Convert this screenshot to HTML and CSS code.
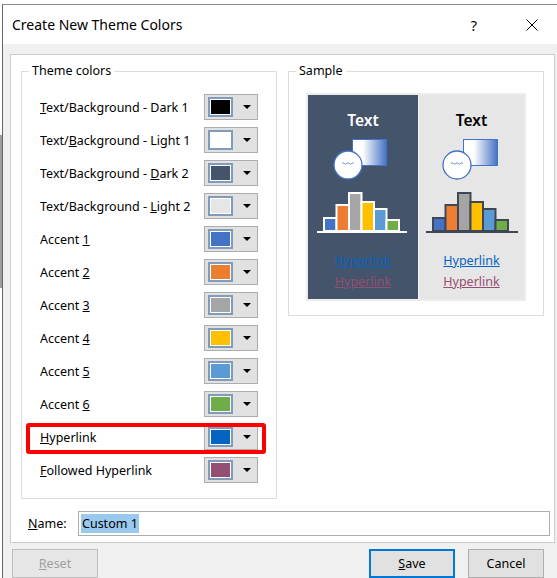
FILE: index.html
```html
<!DOCTYPE html>
<html>
<head>
<meta charset="utf-8">
<title>Create New Theme Colors</title>
<link rel="stylesheet" href="styles.css">
</head>
<body>
<div class="window">
  <div class="titlebar">
    <span class="title">Create New Theme Colors</span>
    <span class="help">?</span>
    <svg class="close" viewBox="0 0 12 12" width="12" height="12"><path d="M0.5 0.5L11.5 11.5M11.5 0.5L0.5 11.5"/></svg>
  </div>
  <div class="body">
    <div class="panel">
      <div class="groups">
        <fieldset class="group theme">
          <legend>Theme colors</legend>
          <div class="rows">
            <div class="row"><span class="label"><u>T</u>ext/Background - Dark 1</span><span class="cbtn"><span class="swatch c-dark1"></span><span class="arrow"></span></span></div>
            <div class="row"><span class="label">Text/<u>B</u>ackground - Light 1</span><span class="cbtn"><span class="swatch c-light1"></span><span class="arrow"></span></span></div>
            <div class="row"><span class="label">Text/Background - <u>D</u>ark 2</span><span class="cbtn"><span class="swatch c-dark2"></span><span class="arrow"></span></span></div>
            <div class="row"><span class="label">Text/Background - <u>L</u>ight 2</span><span class="cbtn"><span class="swatch c-light2"></span><span class="arrow"></span></span></div>
            <div class="row"><span class="label">Accent <u>1</u></span><span class="cbtn"><span class="swatch c-a1"></span><span class="arrow"></span></span></div>
            <div class="row"><span class="label">Accent <u>2</u></span><span class="cbtn"><span class="swatch c-a2"></span><span class="arrow"></span></span></div>
            <div class="row"><span class="label">Accent <u>3</u></span><span class="cbtn"><span class="swatch c-a3"></span><span class="arrow"></span></span></div>
            <div class="row"><span class="label">Accent <u>4</u></span><span class="cbtn"><span class="swatch c-a4"></span><span class="arrow"></span></span></div>
            <div class="row"><span class="label">Accent <u>5</u></span><span class="cbtn"><span class="swatch c-a5"></span><span class="arrow"></span></span></div>
            <div class="row"><span class="label">Accent <u>6</u></span><span class="cbtn"><span class="swatch c-a6"></span><span class="arrow"></span></span></div>
            <div class="row highlighted"><span class="label"><u>H</u>yperlink</span><span class="cbtn"><span class="swatch c-hl"></span><span class="arrow"></span></span><span class="mark"></span></div>
            <div class="row"><span class="label"><u>F</u>ollowed Hyperlink</span><span class="cbtn"><span class="swatch c-fhl"></span><span class="arrow"></span></span></div>
          </div>
        </fieldset>
        <fieldset class="group sample">
          <legend>Sample</legend>
          <div class="preview">
            <div class="half dark">
              <div class="ptext">Text</div>
              <svg class="art" viewBox="0 0 92 99" width="92" height="99">
                <defs>
                  <linearGradient id="gd" x1="0" y1="0" x2="1" y2="0">
                    <stop offset="0" stop-color="#ffffff"/>
                    <stop offset="0.3" stop-color="#ffffff"/>
                    <stop offset="1" stop-color="#4472c4"/>
                  </linearGradient>
                </defs>
                <rect x="35.5" y="4.5" width="34" height="26" fill="url(#gd)" stroke="#4472c4"/>
                <circle cx="31" cy="30" r="14" fill="#ffffff" stroke="#4472c4" stroke-width="1.3"/>
                <path d="M25 28.5q1.2 -1.4 2.4 0t2.4 0t2.4 0t2.4 0t2.4 0" fill="none" stroke="#4472c4" stroke-width="0.8"/>
                <g stroke="#ffffff" stroke-width="2">
                  <rect x="7" y="83" width="12.5" height="13" fill="#4472c4"/>
                  <rect x="19.5" y="70" width="12.5" height="26" fill="#ed7d31"/>
                  <rect x="32" y="58" width="12.5" height="38" fill="#a5a5a5"/>
                  <rect x="44.5" y="67" width="12.5" height="29" fill="#ffc000"/>
                  <rect x="57" y="74" width="12.5" height="22" fill="#5b9bd5"/>
                  <rect x="69.5" y="85" width="12.5" height="11" fill="#70ad47"/>
                </g>
                <rect x="0" y="96" width="90" height="2" fill="#ffffff"/>
              </svg>
              <div class="links">
                <span class="lnk">Hyperlink</span>
                <span class="lnk followed">Hyperlink</span>
              </div>
            </div>
            <div class="half light">
              <div class="ptext">Text</div>
              <svg class="art" viewBox="0 0 92 99" width="92" height="99">
                <defs>
                  <linearGradient id="gl" x1="0" y1="0" x2="1" y2="0">
                    <stop offset="0" stop-color="#ffffff"/>
                    <stop offset="0.3" stop-color="#ffffff"/>
                    <stop offset="1" stop-color="#4472c4"/>
                  </linearGradient>
                </defs>
                <rect x="37.5" y="4.5" width="34" height="26" fill="url(#gl)" stroke="#4472c4"/>
                <circle cx="31" cy="30" r="14" fill="#ffffff" stroke="#4472c4" stroke-width="1.3"/>
                <path d="M25 28.5q1.2 -1.4 2.4 0t2.4 0t2.4 0t2.4 0t2.4 0" fill="none" stroke="#4472c4" stroke-width="0.8"/>
                <g stroke="#3f4756" stroke-width="2">
                  <rect x="7" y="83" width="12.5" height="13" fill="#4472c4"/>
                  <rect x="19.5" y="70" width="12.5" height="26" fill="#ed7d31"/>
                  <rect x="32" y="58" width="12.5" height="38" fill="#a5a5a5"/>
                  <rect x="44.5" y="67" width="12.5" height="29" fill="#ffc000"/>
                  <rect x="57" y="74" width="12.5" height="22" fill="#5b9bd5"/>
                  <rect x="69.5" y="85" width="12.5" height="11" fill="#70ad47"/>
                </g>
                <rect x="0" y="96" width="92" height="2" fill="#3f4756"/>
              </svg>
              <div class="links">
                <span class="lnk">Hyperlink</span>
                <span class="lnk followed">Hyperlink</span>
              </div>
            </div>
          </div>
        </fieldset>
      </div>
      <div class="namerow">
        <span class="namelabel"><u>N</u>ame:</span>
        <div class="input"><span class="sel">Custom 1</span></div>
      </div>
    </div>
    <div class="buttons">
      <button class="btn reset" disabled><u>R</u>eset</button>
      <button class="btn save"><u>S</u>ave</button>
      <button class="btn cancel">Cancel</button>
    </div>
  </div>
</div>
</body>
</html>
```

FILE: styles.css
```css
html, body {
  margin: 0;
  padding: 0;
}
body {
  width: 557px;
  height: 578px;
  overflow: hidden;
  background: linear-gradient(to bottom, #ffffff 0, #ffffff 135px, #9c9c9c 135px, #9c9c9c 288px, #ffffff 288px);
  font-family: "Noto Sans", "Segoe UI", sans-serif;
  font-size: 12px;
  color: #000;
}
.window {
  margin: 4px 0 0 2px;
  border-top: 1px solid #8c8c8c;
  border-left: 1px solid #666;
  background: #f0f0f0;
  height: 573px;
}
.titlebar {
  height: 39px;
  background: #fff;
  display: flex;
  align-items: center;
  padding-left: 9px;
}
.title {
  flex: 1;
  font-size: 14px;
  color: #000;
}
.help {
  width: 16px;
  text-align: center;
  font-size: 14.5px;
  margin-right: 44px;
}
.close {
  display: block;
  margin-right: 19px;
}
.close path {
  stroke: #000;
  stroke-width: 1;
  fill: none;
}
.body {
  padding: 10px 0 0 7px;
}
.panel {
  width: 545px;
  box-sizing: border-box;
  background: #fff;
  border: 1px solid #cccccc;
  padding: 8px 0 6px 0;
}
.groups {
  display: flex;
  align-items: flex-start;
  gap: 11px;
  padding-left: 10px;
}
.group {
  margin: 0;
  padding: 0;
  border: 1px solid #dcdcdc;
  box-sizing: border-box;
  min-width: 0;
}
.group legend {
  margin-left: 7px;
  padding: 0 3px;
  line-height: 16px;
  font-size: 12.5px;
}
.theme {
  width: 256px;
}
.sample {
  width: 256px;
}
.rows {
  display: flex;
  flex-direction: column;
  gap: 7px;
  padding: 15px 18px 15px 18px;
}
.row {
  position: relative;
  display: flex;
  align-items: center;
  justify-content: space-between;
  height: 26px;
}
.label {
  font-size: 12.5px;
  white-space: nowrap;
}
.cbtn {
  width: 54px;
  height: 26px;
  box-sizing: border-box;
  background: #e1e1e1;
  border: 1px solid #adadad;
  display: flex;
  align-items: center;
  padding-left: 3px;
}
.swatch {
  width: 25px;
  height: 20px;
  box-sizing: border-box;
  border: 2px solid #7f9cbc;
  box-shadow: inset 0 0 0 1px #fff;
}
.arrow {
  width: 0;
  height: 0;
  margin-left: 10px;
  border-left: 4.5px solid transparent;
  border-right: 4.5px solid transparent;
  border-top: 4.5px solid #000;
}
.c-dark1 { background: #000000; }
.c-light1 { background: #ffffff; }
.c-dark2 { background: #44546a; }
.c-light2 { background: #e7e6e6; }
.c-a1 { background: #4472c4; }
.c-a2 { background: #ed7d31; }
.c-a3 { background: #a5a5a5; }
.c-a4 { background: #ffc000; }
.c-a5 { background: #5b9bd5; }
.c-a6 { background: #70ad47; }
.c-hl { background: #0563c1; }
.c-fhl { background: #954f72; }
.mark {
  position: absolute;
  left: -14px;
  right: -8px;
  top: -1px;
  bottom: -4px;
  border: 4px solid #ff0000;
  border-radius: 3px;
  pointer-events: none;
}
.preview {
  margin: 14px 0 14px 17px;
  width: 220px;
  height: 208px;
  box-sizing: border-box;
  border: 2px solid #ececec;
  display: flex;
}
.half {
  display: flex;
  flex-direction: column;
  align-items: center;
  padding-top: 15px;
}
.dark {
  width: 110px;
  background: #44546a;
}
.light {
  flex: 1;
  background: #e7e6e6;
  border-left: 1px solid #f4f4f4;
}
.ptext {
  font-size: 15.5px;
  font-weight: 600;
  line-height: 20px;
}
.dark .ptext { color: #fff; }
.light .ptext { color: #000; }
.art {
  display: block;
  margin-top: 5px;
}
.links {
  margin-top: 16px;
  display: flex;
  flex-direction: column;
  align-items: center;
}
.lnk {
  font-size: 12.5px;
  line-height: 21px;
  color: #0563c1;
  text-decoration: underline;
}
.lnk.followed {
  color: #954f72;
}
.namerow {
  display: flex;
  align-items: center;
  margin-top: 12px;
  padding: 0 4px 0 17px;
}
.namelabel {
  width: 50px;
  font-size: 12.5px;
}
.input {
  flex: 1;
  height: 25px;
  box-sizing: border-box;
  border: 1px solid #adadad;
  display: flex;
  align-items: center;
  padding-left: 2px;
}
.sel {
  background: #99c9ef;
  font-size: 12.5px;
  line-height: 19px;
  padding: 0 1px;
}
.buttons {
  display: flex;
  gap: 13px;
  width: 534px;
  box-sizing: border-box;
  padding-left: 2px;
  margin-top: 6px;
}
.btn {
  height: 29px;
  box-sizing: border-box;
  font-family: "Noto Sans", "Segoe UI", sans-serif;
  font-size: 12.5px;
  color: #000;
  background: #e1e1e1;
  border: 1px solid #adadad;
  padding: 0;
}
.reset {
  width: 86px;
  margin-right: auto;
  color: #a0a0a0;
  border-color: #bfbfbf;
  background: #e6e6e6;
}
.save {
  width: 86px;
  border: 2px solid #0078d7;
}
.cancel {
  width: 76px;
}
```
